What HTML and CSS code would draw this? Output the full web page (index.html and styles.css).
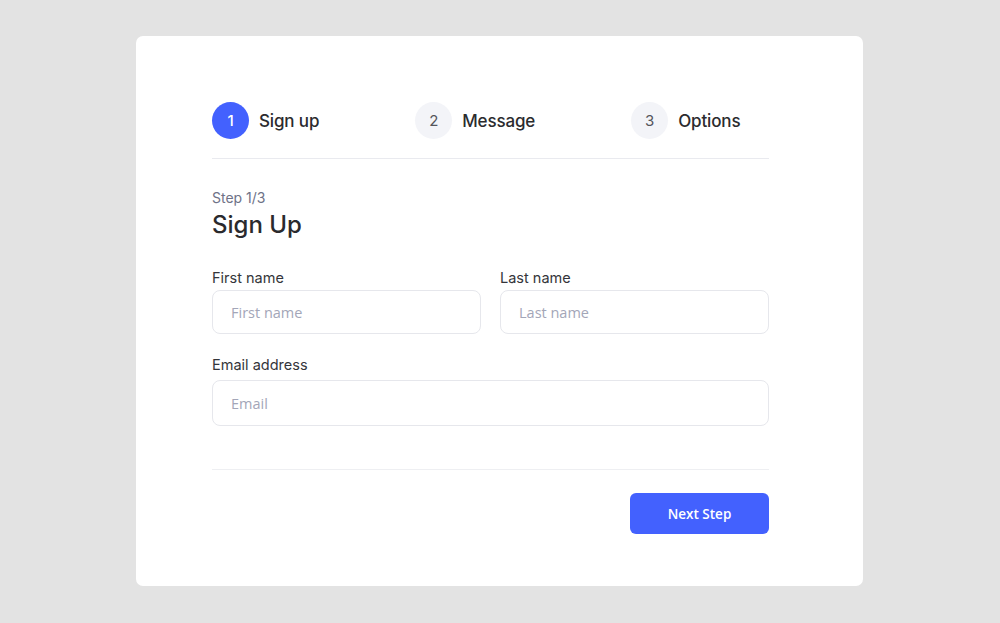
FILE: index.html
```html
<!DOCTYPE html>
<html lang="en">
<head>
<meta charset="utf-8">
<title>Sign Up</title>
<link rel="stylesheet" href="styles.css">
</head>
<body>
<main class="card">
  <div class="inner">
    <ol class="steps">
      <li class="step active"><span class="num">1</span><span class="step-label">Sign up</span></li>
      <li class="step"><span class="num">2</span><span class="step-label">Message</span></li>
      <li class="step"><span class="num">3</span><span class="step-label">Options</span></li>
    </ol>
    <form class="form">
      <p class="step-count">Step 1/3</p>
      <h1 class="title">Sign Up</h1>
      <div class="row">
        <label class="field">
          <span class="label">First name</span>
          <input class="input" type="text" placeholder="First name">
        </label>
        <label class="field">
          <span class="label">Last name</span>
          <input class="input" type="text" placeholder="Last name">
        </label>
      </div>
      <label class="field email">
        <span class="label">Email address</span>
        <input class="input tall" type="email" placeholder="Email">
      </label>
      <div class="actions">
        <button class="btn" type="button">Next Step</button>
      </div>
    </form>
  </div>
</main>
</body>
</html>
```

FILE: styles.css
```css
* { box-sizing: border-box; }
html, body { margin: 0; padding: 0; }
body {
  background: #e3e3e3;
  font-family: Inter, "Noto Sans", sans-serif;
  color: #2b2b2e;
  height: 623px;
  padding-top: 36px;
}
.card {
  width: 727px;
  height: 550px;
  margin-left: 136px;
  background: #ffffff;
  border-radius: 7px;
  padding: 66px 94px 0 76px;
}
.inner { width: 557px; }
.steps {
  list-style: none;
  margin: 0;
  padding: 0 0 19px;
  display: flex;
  gap: 96px;
  border-bottom: 1px solid #e9eaef;
}
.step {
  display: flex;
  align-items: center;
  gap: 10px;
}
.num {
  width: 37px;
  height: 37px;
  border-radius: 50%;
  background: #f3f4f8;
  color: #55565c;
  display: flex;
  align-items: center;
  justify-content: center;
  font-size: 15px;
}
.step.active .num {
  background: #4361fe;
  color: #ffffff;
  font-weight: 500;
}
.step-label {
  font-size: 17px;
  letter-spacing: -0.15px;
  font-weight: 500;
  color: #2b2b2e;
}
.form { padding-top: 29px; }
.step-count {
  margin: 0;
  font-size: 14px;
  line-height: 20px;
  color: #6e7287;
}
.title {
  margin: 2px 0 0;
  font-size: 24px;
  line-height: 30px;
  font-weight: 500;
  color: #2a2a2d;
}
.row {
  display: grid;
  grid-template-columns: 1fr 1fr;
  gap: 19px;
  margin-top: 28px;
}
.field {
  display: flex;
  flex-direction: column;
  gap: 2px;
}
.email { margin-top: 21px; }
.label {
  font-size: 14.5px;
  line-height: 20px;
  color: #34353a;
}
.email .label { margin-bottom: 3px; }
.input {
  height: 44px;
  border: 1px solid #e6e7ec;
  border-radius: 8px;
  padding: 0 18px;
  font-family: "Open Sans", "Noto Sans", sans-serif;
  font-size: 14.5px;
  color: #2b2b2e;
  background: #fff;
  outline: none;
}
.input.tall { height: 46px; }
.input::placeholder { color: #a3a6b8; }
.actions {
  margin-top: 43px;
  border-top: 1px solid #eeeff2;
  padding-top: 23px;
  display: flex;
  justify-content: flex-end;
}
.btn {
  width: 139px;
  height: 41px;
  border: none;
  border-radius: 6px;
  background: #4361fe;
  color: #ffffff;
  font-family: "Open Sans", "Noto Sans", sans-serif;
  font-size: 13.5px;
  font-weight: 600;
  cursor: pointer;
}
```
